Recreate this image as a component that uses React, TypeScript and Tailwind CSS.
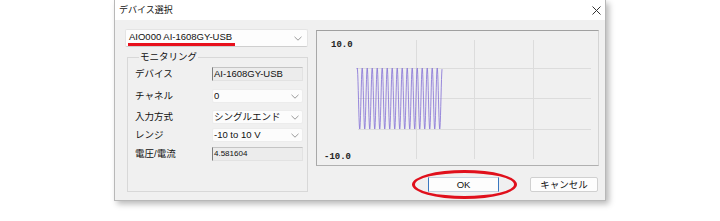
import React from "react";

const F = "font-['Liberation_Sans','Noto_Sans_CJK_JP',sans-serif]";

function Chevron() {
  return (
    <svg width="8" height="5" viewBox="0 0 8 5" className="shrink-0">
      <path d="M0.5 0.8 L4 4.2 L7.5 0.8" stroke="#9a9a9a" strokeWidth="1" fill="none" />
    </svg>
  );
}

function ReadOnly({ children, small }: { children: React.ReactNode; small?: boolean }) {
  return (
    <div
      className={
        "w-[91px] h-[14px] flex items-start pl-[1px] bg-[#ececec] border-t border-l border-r border-b border-t-[#c4c4c4] border-l-[#7c7c7c] border-r-[#e2e2e2] border-b-[#e2e2e2] text-[#111] leading-[12px] " +
        (small ? "text-[8px]" : "text-[9.5px]")
      }
    >
      {children}
    </div>
  );
}

function Combo({ children }: { children: React.ReactNode }) {
  return (
    <div className="w-[91px] h-[14px] flex items-center justify-between pl-[1px] pr-[3px] bg-[#fcfcfc] border border-[#ececec] rounded-[2px] text-[9.5px] text-[#111] leading-[12px]">
      <span>{children}</span>
      <Chevron />
    </div>
  );
}

function Row({ label, children, mt }: { label: string; children: React.ReactNode; mt: string }) {
  return (
    <div className={"flex items-center h-[14px] " + mt}>
      <div className="w-[77px] text-[9.5px] text-[#111] leading-[12px]">{label}</div>
      {children}
    </div>
  );
}

const wave = (() => {
  const pts: string[] = [];
  for (let x = 0; x <= 85; x += 0.25) {
    const y = 67.5 - 30.5 * Math.sin((2 * Math.PI * x) / 5 + 1.3);
    pts.push(`${(40 + x).toFixed(2)},${y.toFixed(2)}`);
  }
  return pts.join(" ");
})();

function Chart() {
  return (
    <svg width="281" height="134" viewBox="0 0 281 134">
      {[99.5, 157.5, 216.5].map((x) => (
        <line key={x} x1={x} y1={9} x2={x} y2={128} stroke="#dcdcdc" strokeWidth="1" />
      ))}
      {[37.5, 67.5, 98.5].map((y) => (
        <line key={y} x1={41} y1={y} x2={274} y2={y} stroke="#dcdcdc" strokeWidth="1" />
      ))}
      <polyline points={wave} fill="none" stroke="#8c7ad8" strokeWidth="0.9" />
      <text x="14" y="15.5" fontFamily="Liberation Mono, monospace" fontSize="9" fontWeight="bold" fill="#222">
        10.0
      </text>
      <text x="7" y="127.5" fontFamily="Liberation Mono, monospace" fontSize="9" fontWeight="bold" fill="#222">
        -10.0
      </text>
    </svg>
  );
}

export default function App() {
  return (
    <div className={"w-[720px] h-[221px] bg-white " + F}>
      <div className="ml-[114px] w-[492px] h-[201px] flex flex-col border-x border-b border-[#b8b8b8] shadow-[3px_3px_6px_rgba(0,0,0,0.28)]">
        <div className="h-[20px] bg-white flex items-center justify-between pl-[4px] pr-[4px]">
          <span className="text-[9px] text-[#111] leading-[12px]">デバイス選択</span>
          <svg width="9" height="9" viewBox="0 0 9 9">
            <path d="M0.5 0.5 L8.5 8.5 M8.5 0.5 L0.5 8.5" stroke="#333" strokeWidth="1" />
          </svg>
        </div>
        <div className="flex-1 bg-[#f0f0f0] flex pt-[9px] pl-[10px] pr-[6px] pb-[8px] gap-[8px]">
          {/* left column */}
          <div className="w-[183px] flex flex-col">
            <div className="relative h-[18px] flex items-center justify-between pl-[3px] pr-[5px] bg-[#fdfdfd] border border-[#e4e4e4] border-b-[#cfcfcf] rounded-[2px]">
              <span className="text-[9.5px] text-[#111] leading-[12px] -mt-[2px]">AIO000 AI-1608GY-USB</span>
              <Chevron />
              <div className="absolute left-[2px] top-[13px] w-[107px] h-[3px] bg-[#e8101c]" />
            </div>
            <fieldset className="mt-[3px] ml-[2px] w-[181px] h-[142px] border border-[#d8d8d8] pl-[7px]">
              <legend className="ml-[4px] px-[1px] text-[9.5px] leading-[14px] text-[#111]">モニタリング</legend>
              <Row label="デバイス" mt="mt-[3px]">
                <ReadOnly>AI-1608GY-USB</ReadOnly>
              </Row>
              <Row label="チャネル" mt="mt-[8px]">
                <Combo>0</Combo>
              </Row>
              <Row label="入力方式" mt="mt-[7px]">
                <Combo>シングルエンド</Combo>
              </Row>
              <Row label="レンジ" mt="mt-[4px]">
                <Combo>-10 to 10 V</Combo>
              </Row>
              <Row label="電圧/電流" mt="mt-[5px]">
                <ReadOnly small>4.581604</ReadOnly>
              </Row>
            </fieldset>
          </div>
          {/* right column */}
          <div className="w-[283px] flex flex-col">
            <div className="mt-[1px] h-[136px] border border-t-[#a0a0a0] border-l-[#a8a8a8] border-r-[#d4d4d4] border-b-[#b0b0b0] bg-[#f0f0f0]">
              <Chart />
            </div>
            <div className="mt-[11px] flex justify-end gap-[31px] pr-[1px]">
              <div className="relative">
                <div className="w-[71px] h-[15px] flex items-center justify-center bg-[#fdfdfd] border border-x-[#3a78c0] border-y-[#c8d3df] text-[9.5px] leading-[12px] text-[#111]">
                  OK
                </div>
                <div className="absolute left-[-16px] top-[-7px] w-[105px] h-[29px] rounded-[50%] border-[3px] border-[#e0101c]" />
              </div>
              <div className="w-[68px] h-[15px] flex items-center justify-center bg-[#fdfdfd] border border-[#d0d0d0] rounded-[2px] text-[9.5px] leading-[12px] text-[#111]">
                キャンセル
              </div>
            </div>
          </div>
        </div>
      </div>
    </div>
  );
}
